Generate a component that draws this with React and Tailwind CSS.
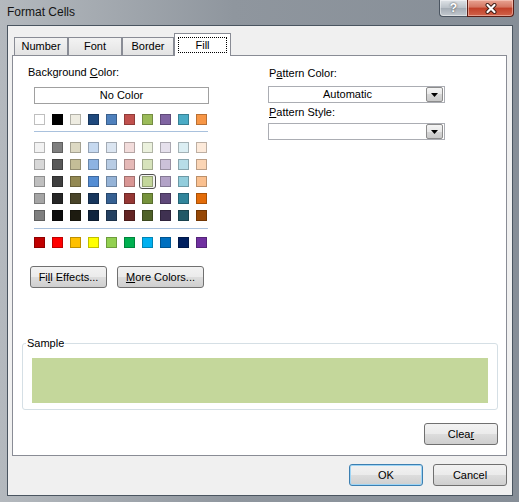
import React from 'react';

const themeBase = ['#FFFFFF', '#000000', '#EEECE1', '#1F497D', '#4F81BD', '#C0504D', '#9BBB59', '#8064A2', '#4BACC6', '#F79646'];
const themeShades = [
  ['#F2F2F2', '#7F7F7F', '#DDD9C3', '#C6D9F0', '#DBE5F1', '#F2DCDB', '#EBF1DD', '#E5E0EC', '#DBEEF3', '#FDEADA'],
  ['#D8D8D8', '#595959', '#C4BD97', '#8DB3E2', '#B8CCE4', '#E5B9B7', '#D7E3BC', '#CCC1D9', '#B7DDE8', '#FBD5B5'],
  ['#BFBFBF', '#3F3F3F', '#938953', '#548DD4', '#95B3D7', '#D99694', '#C3D69B', '#B2A2C7', '#92CDDC', '#FAC08F'],
  ['#A5A5A5', '#262626', '#494429', '#17365D', '#366092', '#953734', '#76923C', '#5F497A', '#31859B', '#E36C09'],
  ['#7F7F7F', '#0C0C0C', '#1D1B10', '#0F243E', '#244061', '#632423', '#4F6128', '#3F3151', '#205867', '#974806'],
];
const standardColors = ['#C00000', '#FF0000', '#FFC000', '#FFFF00', '#92D050', '#00B050', '#00B0F0', '#0070C0', '#002060', '#7030A0'];

const btn =
  'h-[22px] rounded-[3px] border flex items-center justify-center leading-none bg-[linear-gradient(to_bottom,#f2f2f2_0%,#ebebeb_50%,#dddddd_50%,#cfcfcf_100%)]';

const Swatch = ({ color, selected }) => (
  <div className="relative w-[11px] h-[11px]">
    {selected && (
      <div className="absolute -left-[3px] -top-[2px] w-[17px] h-[15px] rounded-[3px] border border-[#505050] bg-[#f4f4f4]" />
    )}
    <div className="relative w-[11px] h-[11px] border border-black/25" style={{ backgroundColor: color }} />
  </div>
);

const SwatchRow = ({ colors, selectedIndex = -1 }) => (
  <div className="flex gap-[7px]">
    {colors.map((c, i) => (
      <Swatch key={i} color={c} selected={i === selectedIndex} />
    ))}
  </div>
);

const Separator = () => <div className="h-px w-[174px] bg-[#a9c1dd]" />;

const DropDown = ({ value }) => (
  <div className="w-[177px] h-[17px] border border-[#abadb3] bg-white flex items-center">
    <div className="flex-1 text-center leading-none">{value}</div>
    <div className="w-[17px] h-[15px] mr-px rounded-[2px] border border-[#8c8c8c] bg-[linear-gradient(to_bottom,#f4f4f4_0%,#e8e8e8_50%,#d6d6d6_50%,#c9c9c9_100%)] flex items-center justify-center">
      <svg width="7" height="4" viewBox="0 0 7 4">
        <path d="M0 0 H7 L3.5 4 Z" fill="#000" />
      </svg>
    </div>
  </div>
);

const Tab = ({ label, w }) => (
  <div
    className={`${w} h-[18px] border border-b-0 border-[#898c95] bg-[linear-gradient(to_bottom,#f3f3f3,#e3e3e3)] flex items-center justify-center`}
  >
    {label}
  </div>
);

export default function App() {
  return (
    <div className="w-[519px] h-[502px] overflow-hidden bg-[linear-gradient(to_right,#b4b9be,#8f969e_45%,#868e97)] font-['Liberation_Sans',Arial,sans-serif] text-[11px] text-black">
      {/* Title bar */}
      <div className="h-[25px] flex items-start justify-between">
        <div className="pl-[7px] pt-[5px] text-[12px] leading-[14px] text-[#141414]">Format Cells</div>
        <div className="flex mr-[5px]">
          <div className="w-[28px] h-[17px] border border-t-0 border-r-0 border-[#4b5561] rounded-bl-[4px] bg-[linear-gradient(to_bottom,#dfe3e7,#b9c0c7_50%,#a3abb4_50%,#c3c9cf)] shadow-[inset_0_0_0_1px_rgba(255,255,255,0.45)] flex items-center justify-center">
            <span className="text-[12px] font-bold leading-none text-white [text-shadow:0_0_2px_#333]">?</span>
          </div>
          <div className="w-[47px] h-[17px] border border-t-0 border-[#5a1d15] rounded-br-[4px] bg-[linear-gradient(to_bottom,#e8a493,#d47561_45%,#c13f28_50%,#d0634b)] shadow-[inset_0_0_0_1px_rgba(255,220,210,0.5)] flex items-center justify-center">
            <svg width="14" height="11" viewBox="0 0 14 11">
              <path d="M3.5 2 L10.5 9 M10.5 2 L3.5 9" stroke="#3a1a14" strokeWidth="4" strokeLinecap="round" />
              <path d="M3.5 2 L10.5 9 M10.5 2 L3.5 9" stroke="#fff" strokeWidth="2.2" strokeLinecap="round" />
            </svg>
          </div>
        </div>
      </div>

      {/* Dialog client area */}
      <div className="ml-[7px] w-[506px] h-[471px] border border-[#4a5560] bg-[#f0f0f0]">
        <div className="ml-[4px] w-[495px] pt-[7px]">
          {/* Tabs */}
          <div className="relative z-10 h-[22px] flex items-end pl-[2px]">
            <Tab label="Number" w="w-[54px]" />
            <Tab label="Font" w="w-[54px]" />
            <Tab label="Border" w="w-[52px]" />
            <div className="w-[57px] h-[23px] -mb-px border border-b-0 border-[#898c95] bg-white px-[3px] pt-[3px]">
              <div className="h-[16px] border border-dotted border-black flex items-center justify-center">Fill</div>
            </div>
          </div>

          {/* Tab panel */}
          <div className="h-[401px] border border-[#898c95] bg-white flex flex-col">
            <div className="flex">
              {/* Background colour */}
              <div className="w-[255px] pl-[15px] pt-[9px]">
                <div className="leading-[14px]">
                  Background <span className="underline">C</span>olor:
                </div>
                <div className="ml-[6px] mt-[8px] w-[175px] h-[17px] border border-[#a0a0a0] flex items-center justify-center leading-none">
                  No Color
                </div>
                <div className="ml-[6px] mt-[10px] flex flex-col">
                  <SwatchRow colors={themeBase} />
                  <div className="mt-[6px]">
                    <Separator />
                  </div>
                  <div className="mt-[10px] flex flex-col gap-[6px]">
                    {themeShades.map((row, i) => (
                      <SwatchRow key={i} colors={row} selectedIndex={i === 2 ? 6 : -1} />
                    ))}
                  </div>
                  <div className="mt-[7px]">
                    <Separator />
                  </div>
                  <div className="mt-[8px]">
                    <SwatchRow colors={standardColors} />
                  </div>
                </div>
                <div className="mt-[18px] ml-[2px] flex gap-[10px]">
                  <div className={`${btn} w-[77px] border-[#707070]`}>
                    <span>
                      Fi<span className="underline">l</span>l Effects...
                    </span>
                  </div>
                  <div className={`${btn} w-[87px] border-[#707070]`}>
                    <span>
                      <span className="underline">M</span>ore Colors...
                    </span>
                  </div>
                </div>
              </div>

              {/* Pattern */}
              <div className="pt-[10px]">
                <div className="pl-px leading-[14px]">
                  P<span className="underline">a</span>ttern Color:
                </div>
                <div className="mt-[6px]">
                  <DropDown value="Automatic" />
                </div>
                <div className="pl-px mt-[2px] leading-[14px]">
                  <span className="underline">P</span>attern Style:
                </div>
                <div className="mt-[4px]">
                  <DropDown value="" />
                </div>
              </div>
            </div>

            {/* Sample */}
            <div className="relative mt-[55px] ml-[9px] w-[476px] h-[67px] rounded-[3px] border border-[#d5dfe5] pt-[14px] pl-[9px]">
              <span className="absolute -top-[8px] left-[3px] bg-white px-px leading-[14px]">Sample</span>
              <div className="w-[456px] h-[45px] bg-[#C4D79B]" />
            </div>

            <div className="mt-[13px] flex justify-end pr-[8px]">
              <div className={`${btn} w-[74px] border-[#707070]`}>
                <span>
                  Clea<span className="underline">r</span>
                </span>
              </div>
            </div>
          </div>

          {/* OK / Cancel */}
          <div className="mt-[8px] flex justify-end gap-[10px]">
            <div className={`${btn} w-[74px] border-[#3c7fb1] shadow-[inset_0_0_0_1px_#9fd5f5]`}>OK</div>
            <div className={`${btn} w-[74px] border-[#707070]`}>Cancel</div>
          </div>
        </div>
      </div>
    </div>
  );
}
